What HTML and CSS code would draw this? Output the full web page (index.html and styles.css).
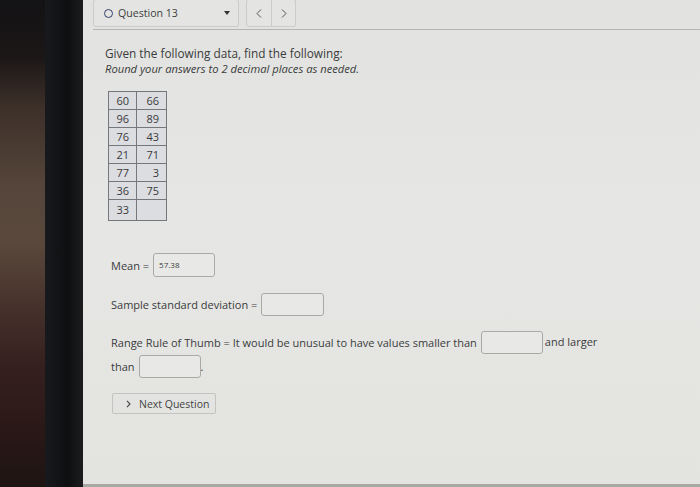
FILE: index.html
```html
<!DOCTYPE html>
<html>
<head>
<meta charset="utf-8">
<link rel="stylesheet" href="styles.css">
</head>
<body>
<div class="frame">
  <div class="photo"></div>
  <div class="bezel"></div>
  <div class="screen">
    <div class="header">
      <div class="qselect">
        <span class="circle"></span>
        <span class="qlabel">Question 13</span>
        <span class="caret"></span>
      </div>
      <div class="nav">
        <span class="navbtn"><svg width="6" height="9" viewBox="0 0 6 9"><path d="M5 0.5 L1 4.5 L5 8.5" fill="none" stroke="#555" stroke-width="1"/></svg></span>
        <span class="navbtn"><svg width="6" height="9" viewBox="0 0 6 9"><path d="M1 0.5 L5 4.5 L1 8.5" fill="none" stroke="#555" stroke-width="1"/></svg></span>
      </div>
    </div>
    <div class="content">
      <p class="prompt">Given the following data, find the following:</p>
      <p class="note">Round your answers to 2 decimal places as needed.</p>
      <table class="data">
        <tr><td>60</td><td>66</td></tr>
        <tr><td>96</td><td>89</td></tr>
        <tr><td>76</td><td>43</td></tr>
        <tr><td>21</td><td>71</td></tr>
        <tr><td>77</td><td>3</td></tr>
        <tr><td>36</td><td>75</td></tr>
        <tr class="last"><td>33</td><td></td></tr>
      </table>
      <div class="row mean">Mean = <span class="box filled">57.38</span></div>
      <div class="row sd">Sample standard deviation = <span class="box"></span></div>
      <div class="row rr">Range Rule of Thumb = It would be unusual to have values smaller than <span class="box"></span> <span class="after">and larger</span></div>
      <div class="row than">than <span class="box"></span>.</div>
      <div class="nextwrap"><span class="next"><svg class="chev" width="5" height="8" viewBox="0 0 5 8"><path d="M1 0.8 L4 4 L1 7.2" fill="none" stroke="#444" stroke-width="1.1"/></svg>Next Question</span></div>
    </div>
  </div>
</div>
</body>
</html>
```
FILE: styles.css
```css
html, body { margin: 0; padding: 0; }
body { width: 700px; height: 487px; overflow: hidden; background: #d9dad6; font-family: "Open Sans", "Liberation Sans", sans-serif; color: #3a3b3c; }
.frame { display: flex; height: 487px; }
.photo { width: 45px; background: linear-gradient(180deg, #131214 0%, #1c1717 12%, #3d3029 22%, #55453a 38%, #5a483c 50%, #47332c 62%, #35201f 75%, #2a1817 88%, #1e1412 100%); }
.bezel { width: 38px; background: linear-gradient(90deg, #18191c 0%, #0e0f11 60%, #1b1c1e 100%); }
.screen { flex: 1; background: linear-gradient(180deg, #e2e3e0 0%, #e6e7e4 50%, #e3e4e0 100%); border-bottom: 3px solid #a8a9a5; }
.header { display: flex; align-items: flex-start; height: 29px; margin-left: 10px; border-bottom: 1px solid #b5b6b2; }
.qselect { width: 146px; height: 28px; margin-top: -1px; border: 1px solid #cbccc8; border-radius: 3px; background: #e4e5e2; display: flex; align-items: center; box-sizing: border-box; padding: 0 8px 0 10px; }
.circle { width: 7px; height: 7px; border: 1.5px solid #33416b; border-radius: 50%; margin-right: 5px; }
.qlabel { font-size: 10.6px; color: #3d3e40; flex: 1; }
.caret { width: 0; height: 0; border-left: 3px solid transparent; border-right: 3px solid transparent; border-top: 4px solid #333; }
.nav { display: flex; margin-left: 7px; margin-top: -1px; }
.navbtn { width: 26px; height: 28px; border: 1px solid #cbccc8; box-sizing: border-box; display: flex; align-items: center; justify-content: center; background: #e4e5e2; }
.navbtn + .navbtn { border-left: none; width: 24px; }
.navbtn:first-child { border-radius: 3px 0 0 3px; }
.navbtn:last-child { border-radius: 0 3px 3px 0; }
.content { padding-left: 22px; font-size: 11px; }
.prompt { margin: 15px 0 0 0; line-height: 16px; font-size: 11.8px; }
.note { margin: 0; font-style: italic; line-height: 16px; font-size: 11.2px; }
.data { border-collapse: collapse; margin: 14px 0 0 3px; }
.data td { border: 1px solid #75777a; height: 17px; padding: 0 7px 0 0; text-align: right; font-size: 11px; line-height: 16px; background: #dcdde1; }
.data td:first-child { width: 20px; }
.data td:last-child { width: 22px; }
.data tr.last td { height: 20px; }
.row { display: flex; align-items: center; margin-left: 6px; }
.mean { margin-top: 32px; }
.box { display: inline-block; width: 62px; height: 24px; border: 1px solid #a9aaa7; border-radius: 3px; background: #e8e9e6; margin-left: 4px; box-sizing: border-box; }
.filled { font-size: 8px; line-height: 22px; padding-left: 5px; }
.sd { margin-top: 16px; }
.sd .box { width: 63px; height: 23px; }
.rr { margin-top: 15px; }
.rr .box { height: 23px; }
.after { margin-left: 2px; margin-top: -2px; }
.than { margin-top: 1px; }
.than .box { margin-left: 4px; height: 23px; }
.nextwrap { margin: 15px 0 0 7px; }
.next { display: inline-flex; align-items: center; width: 104px; height: 21px; border: 1px solid #c3c4c0; border-radius: 2px; box-sizing: border-box; padding-left: 13px; font-size: 10.5px; color: #444; background: #e3e4e1; }
.chev { margin-right: 8px; }
```
